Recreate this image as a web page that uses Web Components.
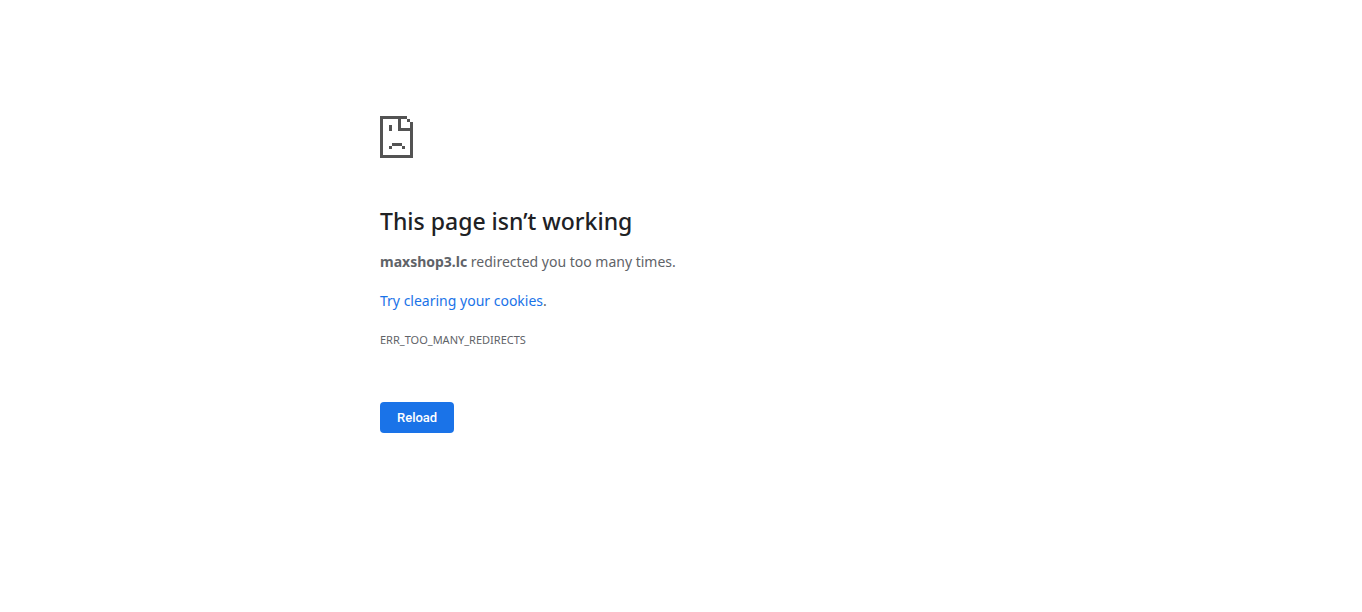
<!DOCTYPE html>
<html lang="en">
<head>
<meta charset="utf-8">
<meta name="viewport" content="width=device-width, initial-scale=1">
<title>maxshop3.lc</title>
<style>
  body { margin: 0; background: #fff; color: #5f6368; font: 14px/20px "Noto Sans", "Open Sans", sans-serif; }
</style>
</head>
<body>
<error-page>
  <sad-page-icon slot="icon"></sad-page-icon>
  <error-message>
    <span slot="title">This page isn’t working</span>
    <span slot="summary"><strong>maxshop3.lc</strong> redirected you too many times.</span>
    <help-link slot="suggestion" href="#cookies">Try clearing your cookies</help-link>
    <span slot="code">ERR_TOO_MANY_REDIRECTS</span>
  </error-message>
  <reload-button slot="actions">Reload</reload-button>
</error-page>
<script>
  const define = (name, html, setup) => customElements.define(name, class extends HTMLElement {
    constructor() {
      super();
      this.attachShadow({ mode: 'open' }).innerHTML = html;
    }
    connectedCallback() { if (setup) setup(this); }
  });

  define('error-page', `
    <style>
      :host { display: block; }
      main { box-sizing: border-box; width: 100%; max-width: 602px; margin: 0 auto; padding-top: 116px; }
      .actions { display: flex; margin-top: 52px; }
    </style>
    <main>
      <slot name="icon"></slot>
      <slot></slot>
      <div class="actions"><slot name="actions"></slot></div>
    </main>`);

  define('sad-page-icon', `
    <style>
      :host { display: block; margin-bottom: 48px; }
      svg { display: block; width: 33px; height: 42px; }
    </style>
    <svg viewBox="0 0 33 42" fill="#535353" shape-rendering="crispEdges" aria-hidden="true">
      <path d="M0 0H27V3H3V39H30V6H33V42H0Z"/>
      <path d="M27 3H30V6H27Z"/>
      <path d="M18 3H21V12H30V15H18Z"/>
      <path d="M9 9H12V15H9Z"/>
      <path d="M12 27H22V30H12ZM9 30H12V33H9ZM22 30H25V33H22Z"/>
    </svg>`);

  define('error-message', `
    <style>
      :host { display: block; }
      h1 { margin: 0 0 16px; color: #202124; font-size: 23px; font-weight: 500; line-height: 30px; }
      p { margin: 0 0 19px; }
      .code { margin: 0; font-size: 11px; }
    </style>
    <h1><slot name="title"></slot></h1>
    <p><slot name="summary"></slot></p>
    <p><slot name="suggestion"></slot>.</p>
    <p class="code"><slot name="code"></slot></p>`);

  define('help-link', `
    <style>
      :host { display: inline; }
      a { color: #1a73e8; text-decoration: none; }
      a:hover { text-decoration: underline; }
    </style><a><slot></slot></a>`,
    host => { host.shadowRoot.querySelector('a').href = host.getAttribute('href'); });

  define('reload-button', `
    <style>
      :host { display: block; }
      button { display: block; margin: 0; padding: 8px 17px; border: 0; border-radius: 4px; background: #1a73e8; color: #fff; font: 500 13px/15px Roboto, sans-serif; cursor: pointer; }
      button:hover { background: #1765cc; }
    </style><button type="button"><slot></slot></button>`,
    host => { host.shadowRoot.querySelector('button').onclick = () => location.reload(); });
</script>
</body>
</html>
